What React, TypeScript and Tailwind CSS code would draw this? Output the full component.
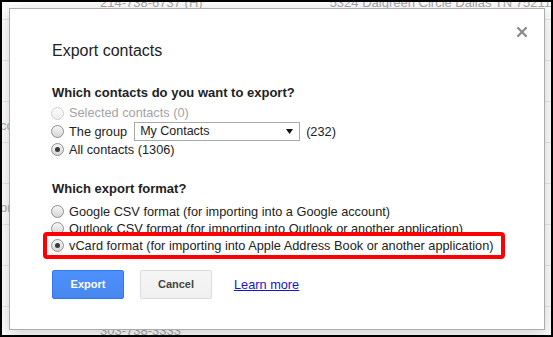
import React from 'react';

type RadioProps = { checked?: boolean; disabled?: boolean };

function Radio({ checked = false, disabled = false }: RadioProps) {
  return (
    <span
      className={`flex h-[13px] w-[13px] shrink-0 items-center justify-center rounded-full border ${
        disabled
          ? 'border-[#d0d0d0] bg-linear-to-b from-[#fbfbfb] to-[#ededed]'
          : 'border-[#8f8f8f] bg-linear-to-b from-[#f6f6f6] to-[#d6d6d6]'
      }`}
    >
      {checked && <span className="h-[5px] w-[5px] rounded-full bg-[#3a3a3a]" />}
    </span>
  );
}

type OptionProps = RadioProps & { label: string; height: string };

function Option({ label, checked, disabled, height }: OptionProps) {
  return (
    <div className={`-ml-[1px] flex items-center gap-[5px] ${height} ${disabled ? 'text-[#a3a3a3]' : 'text-[#222]'}`}>
      <Radio checked={checked} disabled={disabled} />
      <span className="whitespace-nowrap">{label}</span>
    </div>
  );
}

// faded contact rows behind the modal
const rows: { phone?: string; address?: string; edge?: string }[] = [
  { phone: '214-738-6737 (H)', address: '5324 Dalgreen Circle Dallas TN 75211' },
  {},
  {},
  { edge: 'co' },
  {},
  { edge: 'on' },
  {},
  {},
  { phone: '303-738-3333' },
];

export default function App() {
  return (
    <div className="relative h-[337px] w-[553px] overflow-hidden border-2 border-black bg-white font-['Liberation_Sans',Arial,sans-serif]">
      <div className="-mt-[23px] flex flex-col">
        {rows.map((row, i) => (
          <div key={i} className="relative flex h-[41px] shrink-0 border-b border-[#e9e9e9] pt-[16px] text-[13px] leading-[16px] text-[#a8a8a8]">
            {row.edge && <span className="-ml-[2px] w-[40px]">{row.edge}</span>}
            {row.phone && <span className="ml-[98px] w-[239px] whitespace-nowrap">{row.phone}</span>}
            {row.address && <span className="whitespace-nowrap">{row.address}</span>}
          </div>
        ))}
      </div>

      {/* Export dialog */}
      <div className="absolute left-[7px] top-[6px] w-[536px] border border-[#acacac] bg-white px-[42px] pb-[30px] pt-[30px] shadow-[0_4px_16px_rgba(0,0,0,0.2)]">
        <svg className="absolute left-[507px] top-[18px]" width="10" height="10" viewBox="0 0 10 10">
          <path d="M1 1 L9 9 M9 1 L1 9" stroke="#8a8a8a" strokeWidth="2.2" strokeLinecap="square" />
        </svg>

        <h1 className="text-[16px] leading-[24px] text-[#222]">Export contacts</h1>

        <div className="mt-[21px] text-[13px] font-bold leading-[17px] text-[#222]">Which contacts do you want to export?</div>
        <div className="mt-[3px] flex flex-col text-[12.75px]">
          <Option label="Selected contacts (0)" disabled height="h-[18px]" />
          <div className="-ml-[1px] flex h-[19px] items-center text-[#222]">
            <Radio />
            <span className="ml-[5px] whitespace-nowrap">The group</span>
            <div className="ml-[7px] flex h-[19px] w-[166px] items-center justify-between border border-[#a9a9a9] bg-white pl-[5px] pr-[6px] text-[12.5px]">
              <span>My Contacts</span>
              <svg width="7" height="5" viewBox="0 0 7 5">
                <path d="M0 0 L7 0 L3.5 5 Z" fill="#111" />
              </svg>
            </div>
            <span className="ml-[6px]">(232)</span>
          </div>
          <Option label="All contacts (1306)" checked height="h-[17px]" />
        </div>

        <div className="mt-[22px] text-[13px] font-bold leading-[17px] text-[#222]">Which export format?</div>
        <div className="mt-[6px] flex flex-col text-[12.75px]">
          <Option label="Google CSV format (for importing into a Google account)" height="h-[17px]" />
          <Option label="Outlook CSV format (for importing into Outlook or another application)" height="h-[17px]" />
          <Option label="vCard format (for importing into Apple Address Book or another application)" checked height="h-[17px]" />
        </div>

        <div className="mt-[16px] flex items-center">
          <button className="h-[29px] w-[72px] rounded-[2px] border border-[#3079ed] bg-linear-to-b from-[#4d90fe] to-[#4787ed] text-[11px] font-bold text-white">
            Export
          </button>
          <button className="ml-[16px] h-[29px] w-[72px] rounded-[2px] border border-[#dcdcdc] bg-linear-to-b from-[#f5f5f5] to-[#f1f1f1] text-[11px] font-bold text-[#444]">
            Cancel
          </button>
          <a href="#" className="ml-[22px] text-[12.75px] text-[#1515cc] underline">
            Learn more
          </a>
        </div>

        {/* highlight annotation */}
        <div className="pointer-events-none absolute left-[33px] top-[223px] h-[27px] w-[462px] rounded-[4px] border-4 border-[#ff0000]" />
      </div>
    </div>
  );
}
